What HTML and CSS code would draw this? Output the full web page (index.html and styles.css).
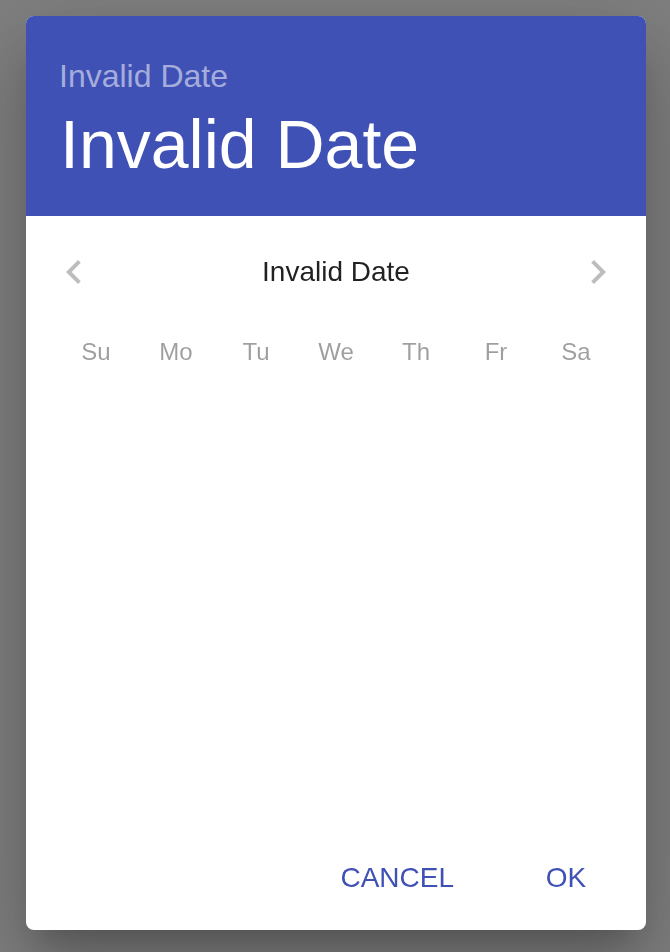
FILE: index.html
```html
<!DOCTYPE html>
<html>
<head>
<meta charset="utf-8">
<link rel="stylesheet" href="styles.css">
</head>
<body>
<div class="page"></div>
<div class="backdrop">
  <div class="dialog">
    <div class="toolbar">
      <div class="toolbar-sub">Invalid Date</div>
      <div class="toolbar-main">Invalid Date</div>
    </div>
    <div class="calendar">
      <div class="switch-header">
        <button class="icon-btn" aria-label="Previous month">
          <svg viewBox="0 0 24 24" width="48" height="48"><path d="M15.41 7.41L14 6l-6 6 6 6 1.41-1.41L10.83 12z"/></svg>
        </button>
        <div class="month-title">Invalid Date</div>
        <button class="icon-btn" aria-label="Next month">
          <svg viewBox="0 0 24 24" width="48" height="48"><path d="M10 6L8.59 7.41 13.17 12l-4.58 4.59L10 18l6-6z"/></svg>
        </button>
      </div>
      <div class="days-header">
        <span class="day-label">Su</span>
        <span class="day-label">Mo</span>
        <span class="day-label">Tu</span>
        <span class="day-label">We</span>
        <span class="day-label">Th</span>
        <span class="day-label">Fr</span>
        <span class="day-label">Sa</span>
      </div>
    </div>
    <div class="actions">
      <button class="text-btn">CANCEL</button>
      <button class="text-btn">OK</button>
    </div>
  </div>
</div>
</body>
</html>
```
FILE: styles.css
```css
html, body {
  margin: 0;
  padding: 0;
  width: 670px;
  height: 952px;
  overflow: hidden;
  background: #ffffff;
  font-family: "Liberation Sans", Arial, sans-serif;
}

.page {
  height: 952px;
}

.backdrop {
  position: fixed;
  inset: 0;
  background: rgba(0, 0, 0, 0.5);
  display: flex;
  align-items: flex-start;
  padding: 16px 0 0 26px;
}

.dialog {
  width: 620px;
  height: 914px;
  background: #ffffff;
  border-radius: 8px;
  overflow: hidden;
  display: flex;
  flex-direction: column;
  box-shadow: 0 22px 30px -14px rgba(0, 0, 0, 0.2),
              0 48px 76px 6px rgba(0, 0, 0, 0.14),
              0 18px 92px 16px rgba(0, 0, 0, 0.12);
}

.toolbar {
  height: 200px;
  flex: 0 0 200px;
  background: #3f51b5;
  display: flex;
  flex-direction: column;
  justify-content: center;
  padding-left: 33px;
  box-sizing: border-box;
}

.toolbar-sub {
  font-size: 32px;
  line-height: 56px;
  color: rgba(255, 255, 255, 0.54);
}

.toolbar-main {
  font-size: 68px;
  line-height: 80px;
  color: #ffffff;
  margin-left: 1px;
}

.calendar {
  flex: 1;
}

.switch-header {
  margin-top: 8px;
  margin-bottom: 16px;
  height: 96px;
  display: flex;
  align-items: center;
  justify-content: space-between;
}

.icon-btn {
  width: 96px;
  height: 96px;
  padding: 24px;
  border: 0;
  background: transparent;
  display: flex;
  align-items: center;
  justify-content: center;
  box-sizing: border-box;
}

.icon-btn svg {
  display: block;
  fill: rgba(0, 0, 0, 0.26);
}

.month-title {
  font-size: 28px;
  color: rgba(0, 0, 0, 0.87);
  text-align: center;
}

.days-header {
  display: flex;
  justify-content: center;
  height: 32px;
}

.day-label {
  width: 72px;
  margin: 0 4px;
  text-align: center;
  font-size: 24px;
  line-height: 32px;
  color: rgba(0, 0, 0, 0.38);
}

.actions {
  display: flex;
  justify-content: flex-end;
  align-items: center;
  gap: 32px;
  padding: 16px;
}

.text-btn {
  min-width: 128px;
  height: 72px;
  padding: 0 16px;
  border: 0;
  background: transparent;
  font-family: "Liberation Sans", Arial, sans-serif;
  font-size: 28px;
  color: #3f51b5;
  text-align: center;
}
```
